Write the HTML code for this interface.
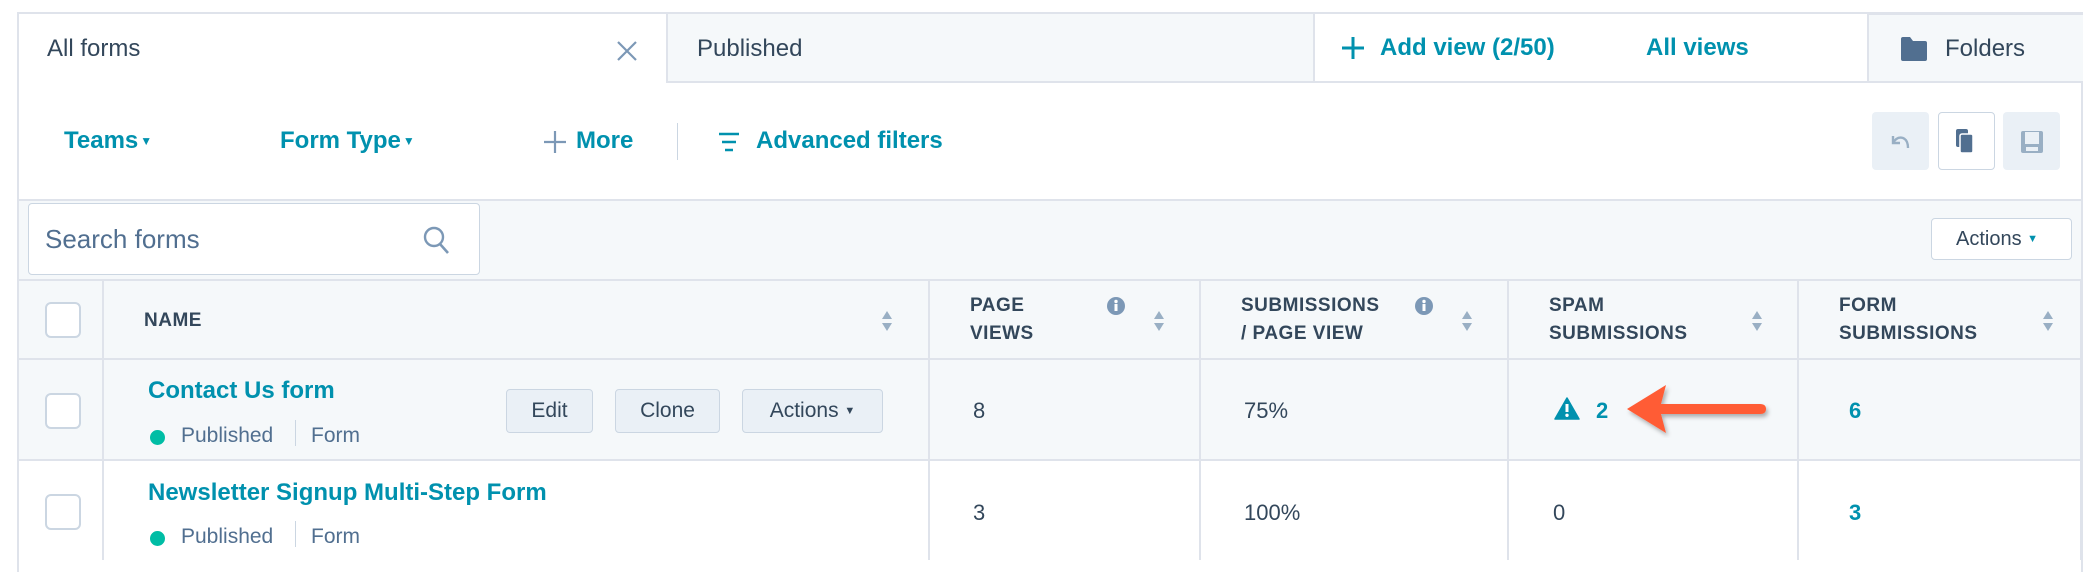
<!DOCTYPE html>
<html><head><meta charset="utf-8"><style>
*{margin:0;padding:0;box-sizing:border-box}
body{width:2100px;height:560px;background:#fff;position:relative;overflow:hidden;font-family:"Liberation Sans",sans-serif;color:#33475b}
.a{position:absolute}
.t{color:#0091ae;font-weight:bold}
.b{border:1px solid #cbd6e2}
.hd{font-size:19px;font-weight:bold;line-height:28px;color:#33475b;letter-spacing:0.5px}
.cb{position:absolute;width:36px;height:36px;border:2px solid #cbd6e2;border-radius:6px;background:#fff}
.btn{position:absolute;background:#eaf0f6;border:1px solid #cbd6e2;border-radius:4px;font-size:21px;color:#33475b;text-align:center;line-height:42px}
.v{font-size:22px;color:#33475b}
.c{font-size:12px;vertical-align:3px;margin-left:2px}
</style></head><body>
<div class="a" style="left:17px;top:12px;width:2066px;height:560px;border:2px solid #dfe3eb;border-bottom:none"></div>
<div class="a" style="left:666px;top:12px;width:649px;height:71px;background:#f5f8fa;border:2px solid #dfe3eb"></div>
<div class="a" style="left:1315px;top:81px;width:552px;height:2px;background:#dfe3eb"></div>
<div class="a" style="left:1867px;top:13px;width:216px;height:70px;background:#f5f8fa;border:2px solid #dfe3eb;border-right:none"></div>
<div class="a" style="left:47px;top:35px;font-size:24px">All forms</div>
<svg class="a" style="left:616px;top:40px" width="22" height="22"><path d="M2 2L20 20M20 2L2 20" stroke="#7c98b6" stroke-width="2.2"/></svg>
<div class="a" style="left:697px;top:35px;font-size:24px">Published</div>
<svg class="a" style="left:1341px;top:36px" width="24" height="24"><path d="M12 1V23M1 12H23" stroke="#0091ae" stroke-width="3"/></svg>
<div class="a t" style="left:1380px;top:34px;font-size:24px">Add view (2/50)</div>
<div class="a t" style="left:1646px;top:34px;font-size:24px">All views</div>
<svg class="a" style="left:1899px;top:36px" width="30" height="26"><path d="M2 3Q2 1 4 1H11L14 5H26Q28 5 28 7V23Q28 25 26 25H4Q2 25 2 23Z" fill="#516f90"/></svg>
<div class="a" style="left:1945px;top:35px;font-size:24px">Folders</div>
<div class="a t" style="left:64px;top:127px;font-size:24px">Teams<span class="c">&#9660;</span></div>
<div class="a t" style="left:280px;top:127px;font-size:24px">Form Type<span class="c">&#9660;</span></div>
<svg class="a" style="left:543px;top:130px" width="24" height="24"><path d="M12 1V23M1 12H23" stroke="#7c98b6" stroke-width="2.2"/></svg>
<div class="a t" style="left:576px;top:127px;font-size:24px">More</div>
<div class="a" style="left:677px;top:123px;width:1px;height:37px;background:#cbd6e2"></div>
<svg class="a" style="left:718px;top:132px" width="22" height="20"><path d="M1 2H21M4 10H18M7 18H15" stroke="#0091ae" stroke-width="2.4"/></svg>
<div class="a t" style="left:756px;top:127px;font-size:24px">Advanced filters</div>
<div class="a" style="left:1872px;top:112px;width:57px;height:58px;background:#eaf0f6;border-radius:4px"></div>
<svg class="a" style="left:1889px;top:132px" width="22" height="20"><path d="M4 4V11H11M4 11Q8 4 14 6Q19 8 19 16" fill="none" stroke="#99afc4" stroke-width="2.4"/></svg>
<div class="a b" style="left:1938px;top:112px;width:57px;height:58px;background:#fff;border-radius:4px"></div>
<svg class="a" style="left:1955px;top:128px" width="22" height="26"><rect x="1" y="1" width="12" height="18" rx="2" fill="#516f90"/><rect x="5" y="6" width="13" height="19" rx="2" fill="#516f90" stroke="#fff" stroke-width="1.5"/></svg>
<div class="a" style="left:2003px;top:112px;width:57px;height:58px;background:#eaf0f6;border-radius:4px"></div>
<svg class="a" style="left:2020px;top:130px" width="24" height="24"><rect x="1" y="1" width="22" height="22" rx="2" fill="#99afc4"/><rect x="5" y="2" width="14" height="12" fill="#eaf0f6"/><rect x="6" y="17" width="12" height="4" fill="#eaf0f6"/></svg>
<div class="a" style="left:19px;top:199px;width:2062px;height:81px;background:#f5f8fa;border-top:2px solid #dfe3eb"></div>
<div class="a b" style="left:28px;top:203px;width:452px;height:72px;background:#fff;border-radius:4px"></div>
<div class="a" style="left:45px;top:224px;font-size:26px;color:#516f90">Search forms</div>
<svg class="a" style="left:423px;top:226px" width="28" height="30"><circle cx="11" cy="11" r="9" fill="none" stroke="#7c98b6" stroke-width="2.4"/><path d="M17 18L25 27" stroke="#7c98b6" stroke-width="2.6"/></svg>
<div class="a b" style="left:1931px;top:218px;width:141px;height:42px;background:#fff;border-radius:4px;font-size:20px;line-height:40px;padding-left:24px">Actions <span style="font-size:11px;color:#0091ae;vertical-align:3px">&#9660;</span></div>
<div class="a" style="left:19px;top:279px;width:2062px;height:81px;background:#f5f8fa;border-top:2px solid #dfe3eb;border-bottom:2px solid #dfe3eb"></div>
<div class="a" style="left:19px;top:360px;width:2062px;height:101px;background:#f5f8fa;border-bottom:2px solid #dfe3eb"></div>
<div class="a" style="left:102px;top:280px;width:2px;height:280px;background:#dfe3eb"></div>
<div class="a" style="left:928px;top:280px;width:2px;height:280px;background:#dfe3eb"></div>
<div class="a" style="left:1199px;top:280px;width:2px;height:280px;background:#dfe3eb"></div>
<div class="a" style="left:1507px;top:280px;width:2px;height:280px;background:#dfe3eb"></div>
<div class="a" style="left:1797px;top:280px;width:2px;height:280px;background:#dfe3eb"></div>
<div class="a" style="left:2080px;top:280px;width:2px;height:280px;background:#dfe3eb"></div>
<div class="cb" style="left:45px;top:302px"></div>
<div class="cb" style="left:45px;top:393px"></div>
<div class="cb" style="left:45px;top:494px"></div>
<div class="a hd" style="left:144px;top:307px">NAME</div>
<div class="a hd" style="left:970px;top:292px">PAGE<br>VIEWS</div>
<div class="a hd" style="left:1241px;top:292px">SUBMISSIONS<br>/ PAGE VIEW</div>
<div class="a hd" style="left:1549px;top:292px">SPAM<br>SUBMISSIONS</div>
<div class="a hd" style="left:1839px;top:292px">FORM<br>SUBMISSIONS</div>
<svg width="0" height="0" style="position:absolute"><defs><g id="s"><path d="M1 9L6 1L11 9Z M1 13L11 13L6 21Z" fill="#99afc4"/></g><g id="i"><circle cx="9" cy="9" r="9" fill="#7c98b6"/><rect x="7.5" y="7" width="3" height="7" fill="#fff"/><circle cx="9" cy="4.5" r="1.7" fill="#fff"/></g></defs></svg>
<svg class="a" style="left:881px;top:310px" width="12" height="22"><use href="#s"/></svg>
<svg class="a" style="left:1153px;top:310px" width="12" height="22"><use href="#s"/></svg>
<svg class="a" style="left:1461px;top:310px" width="12" height="22"><use href="#s"/></svg>
<svg class="a" style="left:1751px;top:310px" width="12" height="22"><use href="#s"/></svg>
<svg class="a" style="left:2042px;top:310px" width="12" height="22"><use href="#s"/></svg>
<svg class="a" style="left:1107px;top:297px" width="18" height="18"><use href="#i"/></svg>
<svg class="a" style="left:1415px;top:297px" width="18" height="18"><use href="#i"/></svg>
<div class="a t" style="left:148px;top:377px;font-size:24px">Contact Us form</div>
<div class="a" style="left:150px;top:430px;width:15px;height:15px;border-radius:50%;background:#00bda5"></div>
<div class="a" style="left:181px;top:424px;font-size:21px;color:#516f90">Published</div>
<div class="a" style="left:295px;top:420px;width:1px;height:26px;background:#cbd6e2"></div>
<div class="a" style="left:311px;top:424px;font-size:21px;color:#516f90">Form</div>
<div class="btn" style="left:506px;top:389px;width:87px;height:44px">Edit</div>
<div class="btn" style="left:615px;top:389px;width:105px;height:44px">Clone</div>
<div class="btn" style="left:742px;top:389px;width:141px;height:44px">Actions <span style="font-size:11px;vertical-align:3px">&#9660;</span></div>
<div class="a v" style="left:973px;top:398px">8</div>
<div class="a v" style="left:1244px;top:398px">75%</div>
<svg class="a" style="left:1554px;top:397px" width="26" height="23"><path d="M13 1L25 22H1Z" fill="#0091ae" stroke="#0091ae" stroke-width="1.5" stroke-linejoin="round"/><rect x="11.5" y="7" width="3" height="8" fill="#fff"/><circle cx="13" cy="18.3" r="1.7" fill="#fff"/></svg>
<div class="a t" style="left:1596px;top:398px;font-size:22px">2</div>
<svg class="a" style="left:1620px;top:380px" width="155" height="62"><defs><filter id="f"><feDropShadow dx="2" dy="3" stdDeviation="2" flood-opacity="0.3"/></filter></defs><path d="M7 29L46 5L41 24H140Q146 24 146 29Q146 34 140 34H41L46 53Z" fill="#ff5c35" filter="url(#f)"/></svg>
<div class="a t" style="left:1849px;top:398px;font-size:22px">6</div>
<div class="a t" style="left:148px;top:479px;font-size:24px">Newsletter Signup Multi-Step Form</div>
<div class="a" style="left:150px;top:531px;width:15px;height:15px;border-radius:50%;background:#00bda5"></div>
<div class="a" style="left:181px;top:525px;font-size:21px;color:#516f90">Published</div>
<div class="a" style="left:295px;top:521px;width:1px;height:26px;background:#cbd6e2"></div>
<div class="a" style="left:311px;top:525px;font-size:21px;color:#516f90">Form</div>
<div class="a v" style="left:973px;top:500px">3</div>
<div class="a v" style="left:1244px;top:500px">100%</div>
<div class="a v" style="left:1553px;top:500px">0</div>
<div class="a t" style="left:1849px;top:500px;font-size:22px">3</div>
</body></html>
